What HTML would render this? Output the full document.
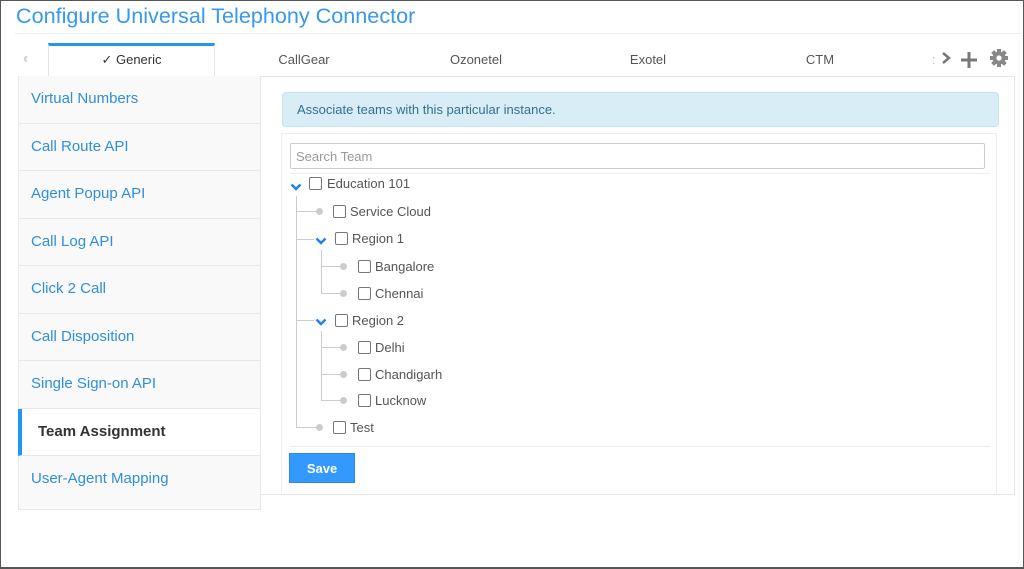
<!DOCTYPE html>
<html><head><style>
*{box-sizing:border-box;margin:0;padding:0}
body{width:1024px;height:569px;background:#fff;font-family:"Liberation Sans",sans-serif;position:relative;overflow:hidden}
.a{position:absolute}
.frame{left:0;top:0;width:1024px;height:569px;border:1px solid #555;border-bottom:2px solid #555;pointer-events:none}
.title{left:16px;top:3px;font-size:21.6px;color:#3798ee}
.tab{top:52px;font-size:13px;color:#555;text-align:center}
.side{left:18px;width:243px;background:#f9f9f9;border:1px solid #e8e8e8;border-top:none;font-size:15px;color:#2f8fd8;padding:14px 0 0 12px}
.cb{position:absolute;width:13px;height:13px;border:1px solid #777;border-radius:2px;background:#fff}
.t{position:absolute;font-size:13px;color:#555}
.dot{position:absolute;width:7px;height:7px;border-radius:50%;background:#ccc}
.vl{position:absolute;width:1px;background:#ccc}
.hl{position:absolute;height:1px;background:#ccc}
.chev{position:absolute;width:12px;height:8px}
</style></head><body>
<div class="a title">Configure Universal Telephony Connector</div>
<div class="a" style="left:15px;top:33px;width:1006px;height:1px;background:#eee"></div>
<div class="a" style="left:23px;top:50px;color:#ccc;font-size:16px;font-weight:bold">&#8249;</div>
<div class="a" style="left:48px;top:43px;width:167px;height:34px;border:1px solid #e5e5e5;border-top:3px solid #2196f3;border-bottom:none;background:#fff"></div>
<div class="a tab" style="left:48px;width:167px;color:#333">✓ Generic</div>
<div class="a tab" style="left:254px;width:100px">CallGear</div>
<div class="a tab" style="left:426px;width:100px">Ozonetel</div>
<div class="a tab" style="left:598px;width:100px">Exotel</div>
<div class="a tab" style="left:770px;width:100px">CTM</div>
<div class="a" style="left:932px;top:52px;color:#bbb;font-size:13px">:</div>
<svg class="a" style="left:940px;top:50px" width="12" height="16"><path d="M3 3l6 5-6 5" stroke="#777" stroke-width="2.5" fill="none"/></svg>
<svg class="a" style="left:960px;top:51px" width="18" height="18"><path d="M9 1v16M1 9h16" stroke="#777" stroke-width="3"/></svg>
<svg class="a" style="left:989px;top:48px" width="20" height="20" viewBox="0 0 20 20"><g fill="#888"><circle cx="10" cy="10" r="6.5"/><g stroke="#888" stroke-width="4"><path d="M10 1v18M1 10h18M3.6 3.6l12.8 12.8M16.4 3.6L3.6 16.4"/></g></g><circle cx="10" cy="10" r="2.6" fill="#fff"/></svg>
<div class="a" style="left:260px;top:76px;width:755px;height:419px;border:1px solid #e5e5e5;border-left:none"></div>
<div class="a" style="left:18px;top:76px;width:243px;height:1px;background:#e8e8e8"></div>
<div class="a side" style="top:76px;height:48px">Virtual Numbers</div>
<div class="a side" style="top:124px;height:47px">Call Route API</div>
<div class="a side" style="top:171px;height:48px">Agent Popup API</div>
<div class="a side" style="top:219px;height:47px">Call Log API</div>
<div class="a side" style="top:266px;height:48px">Click 2 Call</div>
<div class="a side" style="top:314px;height:47px">Call Disposition</div>
<div class="a side" style="top:361px;height:48px">Single Sign-on API</div>
<div class="a side" style="top:409px;height:47px;background:#fff;color:#333;font-weight:bold;padding-left:16px;border-left:4px solid #2196f3">Team Assignment</div>
<div class="a side" style="top:456px;height:54px">User-Agent Mapping</div>
<div class="a" style="left:282px;top:92px;width:717px;height:35px;background:#d9edf7;border:1px solid #c5e3f2;border-radius:4px;font-size:13px;color:#31708f;padding:9px 0 0 14px">Associate teams with this particular instance.</div>
<div class="a" style="left:281px;top:133px;width:716px;height:362px;border:1px solid #eee;border-bottom:none"></div>
<div class="a" style="left:290px;top:143px;width:695px;height:26px;border:1px solid #ccc;border-radius:2px;font-size:13px;color:#999;padding:5px 0 0 5px">Search Team</div>
<div class="a" style="left:290px;top:173px;width:700px;height:1px;background:#eee"></div>
<div class="a" style="left:290px;top:446px;width:700px;height:1px;background:#eee"></div>

<svg class="chev" style="left:290px;top:183px" viewBox="0 0 12 8"><path d="M1.5 1.5l4.5 4.5 4.5-4.5" stroke="#2184e8" stroke-width="2.5" fill="none"/></svg>
<div class="cb" style="left:309px;top:177px"></div><div class="t" style="left:327px;top:176px">Education 101</div>
<div class="vl" style="left:296px;top:196px;height:232px"></div>
<div class="hl" style="left:296px;top:211px;width:20px"></div><div class="dot" style="left:316px;top:208px"></div>
<div class="cb" style="left:333px;top:205px"></div><div class="t" style="left:350px;top:204px">Service Cloud</div>
<div class="hl" style="left:296px;top:239px;width:18px"></div>
<svg class="chev" style="left:315px;top:237px" viewBox="0 0 12 8"><path d="M1.5 1.5l4.5 4.5 4.5-4.5" stroke="#2184e8" stroke-width="2.5" fill="none"/></svg>
<div class="cb" style="left:335px;top:232px"></div><div class="t" style="left:352px;top:231px">Region 1</div>
<div class="vl" style="left:321px;top:250px;height:44px"></div>
<div class="hl" style="left:321px;top:266px;width:20px"></div><div class="dot" style="left:340px;top:263px"></div>
<div class="cb" style="left:358px;top:260px"></div><div class="t" style="left:375px;top:259px">Bangalore</div>
<div class="hl" style="left:321px;top:293px;width:20px"></div><div class="dot" style="left:340px;top:290px"></div>
<div class="cb" style="left:358px;top:287px"></div><div class="t" style="left:375px;top:286px">Chennai</div>
<div class="hl" style="left:296px;top:320px;width:18px"></div>
<svg class="chev" style="left:315px;top:318px" viewBox="0 0 12 8"><path d="M1.5 1.5l4.5 4.5 4.5-4.5" stroke="#2184e8" stroke-width="2.5" fill="none"/></svg>
<div class="cb" style="left:335px;top:314px"></div><div class="t" style="left:352px;top:313px">Region 2</div>
<div class="vl" style="left:321px;top:331px;height:70px"></div>
<div class="hl" style="left:321px;top:347px;width:20px"></div><div class="dot" style="left:340px;top:344px"></div>
<div class="cb" style="left:358px;top:341px"></div><div class="t" style="left:375px;top:340px">Delhi</div>
<div class="hl" style="left:321px;top:374px;width:20px"></div><div class="dot" style="left:340px;top:371px"></div>
<div class="cb" style="left:358px;top:368px"></div><div class="t" style="left:375px;top:367px">Chandigarh</div>
<div class="hl" style="left:321px;top:400px;width:20px"></div><div class="dot" style="left:340px;top:397px"></div>
<div class="cb" style="left:358px;top:394px"></div><div class="t" style="left:375px;top:393px">Lucknow</div>
<div class="hl" style="left:296px;top:427px;width:20px"></div><div class="dot" style="left:316px;top:424px"></div>
<div class="cb" style="left:333px;top:421px"></div><div class="t" style="left:350px;top:420px">Test</div>
<div class="a" style="left:289px;top:453px;width:66px;height:30px;background:#3399ff;border:1px solid #2a8ae8;color:#fff;font-weight:bold;font-size:13px;text-align:center;padding-top:7px">Save</div>
<div class="a frame"></div>
</body></html>
